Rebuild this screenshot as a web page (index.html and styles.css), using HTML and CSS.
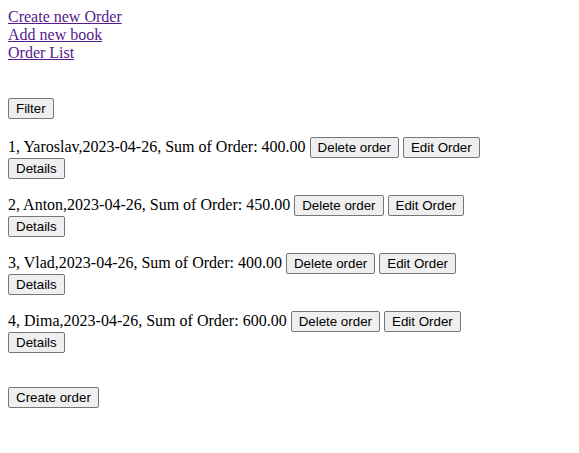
FILE: index.html
```html
<!DOCTYPE html>
<html>
<head>
<meta charset="utf-8">
<link rel="stylesheet" href="styles.css">
</head>
<body>
<nav class="nav">
  <a class="link" href="#">Create new Order</a>
  <a class="link" href="#">Add new book</a>
  <a class="link" href="#">Order List</a>
</nav>
<div class="filter"><button class="btn">Filter</button></div>
<div class="orders">
  <div class="order">
    <div class="line">1, Yaroslav,2023-04-26, Sum of Order: 400.00 <button class="btn">Delete order</button> <button class="btn">Edit Order</button></div>
    <div class="line2"><button class="btn">Details</button></div>
  </div>
  <div class="order">
    <div class="line">2, Anton,2023-04-26, Sum of Order: 450.00 <button class="btn">Delete order</button> <button class="btn">Edit Order</button></div>
    <div class="line2"><button class="btn">Details</button></div>
  </div>
  <div class="order">
    <div class="line">3, Vlad,2023-04-26, Sum of Order: 400.00 <button class="btn">Delete order</button> <button class="btn">Edit Order</button></div>
    <div class="line2"><button class="btn">Details</button></div>
  </div>
  <div class="order">
    <div class="line">4, Dima,2023-04-26, Sum of Order: 600.00 <button class="btn">Delete order</button> <button class="btn">Edit Order</button></div>
    <div class="line2"><button class="btn">Details</button></div>
  </div>
</div>
<div class="create"><button class="btn">Create order</button></div>
</body>
</html>
```
FILE: styles.css
```css
html, body {
  background: #ffffff;
}
body {
  margin: 8px;
  font-family: "Liberation Serif", "Times New Roman", serif;
  font-size: 16px;
  color: #000000;
}
.nav {
  display: flex;
  flex-direction: column;
  align-items: flex-start;
}
.link {
  color: #551a8b;
  text-decoration: underline;
}
.filter {
  margin-top: 36px;
}
.orders {
  margin-top: 18px;
}
.order {
  margin-bottom: 16px;
}
.btn {
  font-family: "Liberation Sans", Arial, sans-serif;
  font-size: 13.333px;
  color: #000000;
  background: #efefef;
  border: 1px solid #767676;
  border-radius: 2px;
  padding: 2px 7px;
  margin: 0;
}
.create {
  margin-top: 34px;
}
```
